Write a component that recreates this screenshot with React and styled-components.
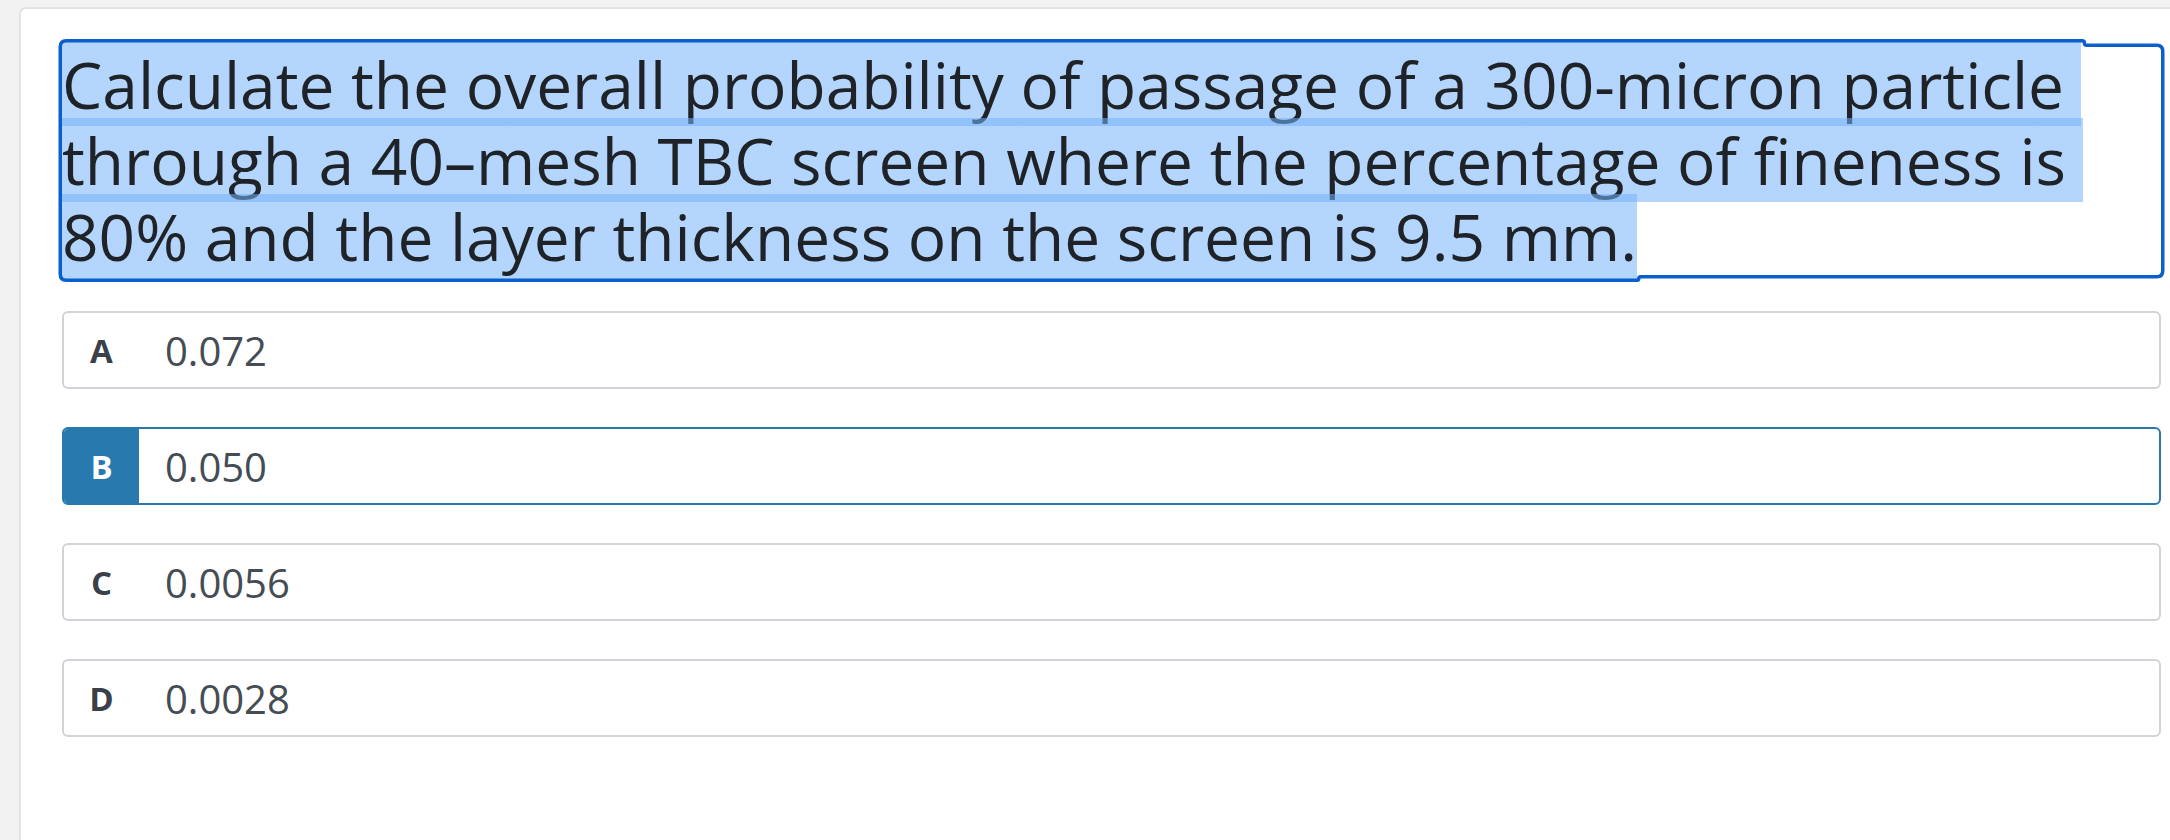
import React, { useLayoutEffect, useRef, useState } from "react";
import styled, { createGlobalStyle } from "styled-components";

const Global = createGlobalStyle`
  html, body {
    margin: 0;
    padding: 0;
    background: #f2f2f2;
    overflow: hidden;
  }
  body {
    font-family: "Open Sans", "Noto Sans", sans-serif;
  }
`;

const Card = styled.div`
  box-sizing: border-box;
  margin: 7px 0 0 19px;
  width: 2185px;
  min-height: 900px;
  padding: 38px 41px;
  background: #ffffff;
  border: 2px solid #e3e3e3;
  border-radius: 7px;
`;

const Question = styled.div`
  position: relative;
  font-size: 64px;
  line-height: 76px;
  color: #1f2327;
  white-space: pre-wrap;
`;

const TRIM = 1.5;

const Selected = styled.span`
  background: linear-gradient(
    to bottom,
    transparent 0 ${TRIM}px,
    rgba(118, 178, 250, 0.55) ${TRIM}px calc(100% - ${TRIM}px),
    transparent calc(100% - ${TRIM}px)
  );
`;

const FocusRing = styled.svg`
  position: absolute;
  left: -10px;
  top: -10px;
  overflow: visible;
  pointer-events: none;
`;

const Options = styled.div`
  display: flex;
  flex-direction: column;
  gap: 38px;
  margin-top: 36px;
`;

const Option = styled.div`
  box-sizing: border-box;
  display: flex;
  align-items: stretch;
  height: 78px;
  border: 2px solid ${(p) => (p.$active ? "#2779ae" : "#d0d4d9")};
  border-radius: 6px;
  overflow: hidden;
  background: #ffffff;
`;

const Label = styled.div`
  flex: 0 0 75px;
  display: flex;
  align-items: center;
  justify-content: center;
  font-size: 33px;
  font-weight: 700;
  color: ${(p) => (p.$active ? "#ffffff" : "#3a414a")};
  background: ${(p) => (p.$active ? "#2779ae" : "transparent")};
`;

const Value = styled.div`
  display: flex;
  align-items: center;
  padding-left: 26px;
  font-size: 40px;
  color: #454c54;
`;

const options = [
  { key: "A", value: "0.072" },
  { key: "B", value: "0.050", active: true },
  { key: "C", value: "0.0056" },
  { key: "D", value: "0.0028" },
];

const QUESTION =
  "Calculate the overall probability of passage of a 300-micron particle through a 40–mesh TBC screen where the percentage of fineness is 80% and the layer thickness on the screen is 9.5 mm.";

function ringPath(s) {
  const P = 10;
  const o = 1.75;
  const rad = 6;
  const L = P - o;
  const Rr = P + s.w + o;
  const Tt = P + Math.min(s.top, 0) - o;
  const Tb = P - o;
  const R1 = P + s.r1 + o;
  const Bb = P + s.h + o;
  const B3 = P + Math.max(s.bottom, s.h) + o;
  const R3 = P + s.r3 + o;
  const st = Math.max(0.01, Math.min(3, (Tb - Tt) / 2));
  const sb = Math.max(0.01, Math.min(3, (B3 - Bb) / 2));
  return [
    `M ${L} ${Tt + rad}`,
    `Q ${L} ${Tt} ${L + rad} ${Tt}`,
    `H ${R1 - st}`,
    `Q ${R1} ${Tt} ${R1} ${Tt + st}`,
    `V ${Tb - st}`,
    `Q ${R1} ${Tb} ${R1 + st} ${Tb}`,
    `H ${Rr - rad}`,
    `Q ${Rr} ${Tb} ${Rr} ${Tb + rad}`,
    `V ${Bb - rad}`,
    `Q ${Rr} ${Bb} ${Rr - rad} ${Bb}`,
    `H ${R3 + sb}`,
    `Q ${R3} ${Bb} ${R3} ${Bb + sb}`,
    `V ${B3 - sb}`,
    `Q ${R3} ${B3} ${R3 - sb} ${B3}`,
    `H ${L + rad}`,
    `Q ${L} ${B3} ${L} ${B3 - rad}`,
    "Z",
  ].join(" ");
}

export default function App() {
  const qRef = useRef(null);
  const sRef = useRef(null);
  const [shape, setShape] = useState(null);

  useLayoutEffect(() => {
    const measure = () => {
      if (!qRef.current || !sRef.current) return;
      const b = qRef.current.getBoundingClientRect();
      const rects = Array.from(sRef.current.getClientRects());
      if (!rects.length) return;
      const first = rects[0];
      const last = rects[rects.length - 1];
      setShape({
        w: b.width,
        h: b.height,
        top: first.top - b.top + TRIM,
        r1: Math.max(...rects.slice(0, -1).map((r) => r.right - b.left), first.right - b.left),
        bottom: last.bottom - b.top - TRIM,
        r3: last.right - b.left,
      });
    };
    measure();
    if (document.fonts && document.fonts.ready) document.fonts.ready.then(measure);
  }, []);

  return (
    <>
      <Global />
      <Card>
        <Question ref={qRef}>
          <Selected ref={sRef}>{QUESTION}</Selected>
          {shape && (
            <FocusRing width={shape.w + 20} height={shape.h + 20}>
              <path d={ringPath(shape)} fill="none" stroke="#0a5fcc" strokeWidth="3.5" />
            </FocusRing>
          )}
        </Question>
        <Options>
          {options.map((o) => (
            <Option key={o.key} $active={o.active}>
              <Label $active={o.active}>{o.key}</Label>
              <Value>{o.value}</Value>
            </Option>
          ))}
        </Options>
      </Card>
    </>
  );
}
